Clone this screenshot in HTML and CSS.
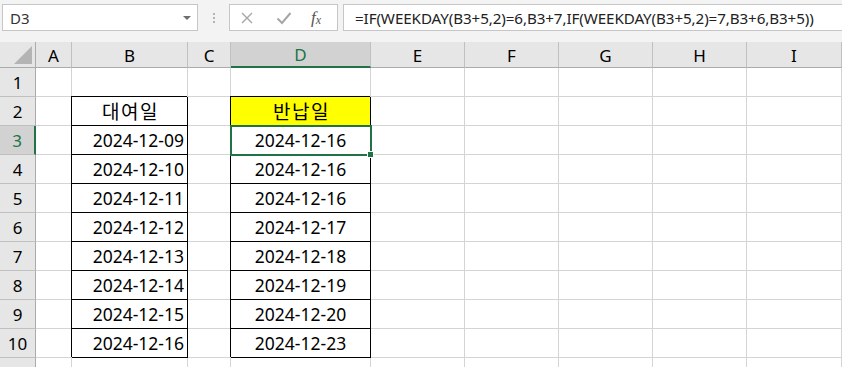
FILE: index.html
```html
<!DOCTYPE html>
<html lang="ko">

<head>
    <meta charset="UTF-8">
    <meta name="viewport" content="width=device-width, initial-scale=1.0">
    <title>반납일 계산</title>
    <link rel="stylesheet" href="styles.css">
</head>

<body>
    <div class="formula-bar">
        <div class="name-box">
            <span>D3</span>
            <span class="caret"></span>
        </div>
        <div class="grip"><i></i><i></i><i></i></div>
        <div class="fx-buttons">
            <svg class="icon" width="14" height="14" viewBox="0 0 14 14">
                <path d="M2 2L12 12M12 2L2 12" stroke="#a6a6a6" stroke-width="1.4" fill="none" />
            </svg>
            <svg class="icon" width="16" height="14" viewBox="0 0 16 14">
                <path d="M1.5 7.5L6 12L14.5 2" stroke="#a6a6a6" stroke-width="2" fill="none" />
            </svg>
            <span class="fx">f<sub>x</sub></span>
        </div>
        <div class="formula">=IF(WEEKDAY(B3+5,2)=6,B3+7,IF(WEEKDAY(B3+5,2)=7,B3+6,B3+5))</div>
    </div>

    <div class="sheet" id="sheet"></div>

    <script>
        const sheet = document.getElementById('sheet');
        const cols = ['A', 'B', 'C', 'D', 'E', 'F', 'G', 'H', 'I'];
        const loans = ['2024-12-09', '2024-12-10', '2024-12-11', '2024-12-12',
            '2024-12-13', '2024-12-14', '2024-12-15', '2024-12-16'];
        const returns = ['2024-12-16', '2024-12-16', '2024-12-16', '2024-12-17',
            '2024-12-18', '2024-12-19', '2024-12-20', '2024-12-23'];

        function cell(cls, text) {
            const el = document.createElement('div');
            el.className = cls;
            if (text) el.textContent = text;
            sheet.appendChild(el);
            return el;
        }

        // header row
        cell('corner');
        cols.forEach(c => cell(c === 'D' ? 'col-head active' : 'col-head', c));

        // rows 1..11
        for (let r = 1; r <= 11; r++) {
            cell(r === 3 ? 'row-head active' : 'row-head', r);
            cols.forEach(c => {
                let cls = 'cell';
                let text = '';
                if (r >= 2 && r <= 10 && (c === 'B' || c === 'D')) cls += ' boxed';
                if (r === 2 && c === 'B') { cls += ' center title'; text = '대여일'; }
                if (r === 2 && c === 'D') { cls += ' center title yellow'; text = '반납일'; }
                if (r >= 3 && r <= 10 && c === 'B') { cls += ' right'; text = loans[r - 3]; }
                if (r >= 3 && r <= 10 && c === 'D') { cls += ' center'; text = returns[r - 3]; }
                if (r === 3 && c === 'D') cls += ' selected';
                cell(cls, text);
            });
        }
    </script>
</body>

</html>
```

FILE: styles.css
```css
body {
    margin: 0;
    background: #ffffff;
    font-family: "Noto Sans", "Noto Sans CJK KR", sans-serif;
    color: #000;
    overflow: hidden;
}

.formula-bar {
    display: flex;
    align-items: center;
    height: 42px;
    padding: 0 0 7px 2px;
    box-sizing: border-box;
    background: #f3f3f3;
}

.name-box,
.fx-buttons,
.formula {
    height: 27px;
    box-sizing: border-box;
    background: #fff;
    border: 1px solid #c6c6c6;
    display: flex;
    align-items: center;
}

.name-box {
    width: 196px;
    padding: 0 6px 0 7px;
    justify-content: space-between;
    font-size: 15px;
    color: #333;
}

.caret {
    width: 0;
    height: 0;
    border-left: 4px solid transparent;
    border-right: 4px solid transparent;
    border-top: 4px solid #6e6e6e;
}

.grip {
    width: 31px;
    display: flex;
    flex-direction: column;
    align-items: center;
    gap: 2px;
}

.grip i {
    width: 2px;
    height: 2px;
    background: #b4b4b4;
}

.fx-buttons {
    width: 109px;
    padding: 0 0 0 10px;
    gap: 22px;
}

.fx {
    font-family: "Liberation Serif", serif;
    font-style: italic;
    font-size: 17px;
    color: #555;
    margin-left: -3px;
    line-height: 1;
}

.fx sub {
    font-size: 12px;
    vertical-align: -1px;
}

.formula {
    flex: 1;
    margin-left: 5px;
    border-right: none;
    padding-left: 11px;
    font-size: 15.2px;
    letter-spacing: -0.1px;
    color: #222;
    white-space: nowrap;
}

.sheet {
    display: grid;
    grid-template-columns: 36px 36px 116px 43px 140px 94px 94px 94px 94px 95px;
    grid-template-rows: 26px repeat(11, 29px);
}

.corner,
.col-head,
.row-head {
    background: #e6e6e6;
    box-sizing: border-box;
    display: flex;
    align-items: center;
    justify-content: center;
    font-size: 17px;
    color: #000;
}

.corner {
    position: relative;
    border-right: 1px solid #ababab;
    border-bottom: 1px solid #ababab;
}

.corner::after {
    content: "";
    position: absolute;
    right: 3px;
    bottom: 3px;
    border-left: 18px solid transparent;
    border-bottom: 18px solid #b4b4b4;
}

.col-head {
    border-right: 1px solid #c0c0c0;
    border-bottom: 1px solid #ababab;
    padding-top: 1px;
}

.col-head.active {
    background: #d2d2d2;
    color: #217346;
    border-bottom: 2px solid #217346;
}

.row-head {
    border-right: 1px solid #ababab;
    border-bottom: 1px solid #c0c0c0;
}

.row-head.active {
    background: #d2d2d2;
    color: #217346;
    border-right: 2px solid #217346;
}

.cell {
    box-sizing: border-box;
    border-right: 1px solid #d4d4d4;
    border-bottom: 1px solid #d4d4d4;
    display: flex;
    align-items: center;
    font-size: 17.5px;
    padding: 0 3px 0 3px;
    white-space: nowrap;
}

.cell.title {
    font-size: 19px;
    letter-spacing: 1.5px;
    padding-left: 5px;
}

.cell.boxed {
    border-right-color: #000;
    border-bottom-color: #000;
    box-shadow: -1px -1px 0 #000;
}

.cell.center {
    justify-content: center;
}

.cell.right {
    justify-content: flex-end;
}

.cell.yellow {
    background: #ffff00;
}

.cell.selected {
    position: relative;
    outline: 2px solid #217346;
    outline-offset: -1px;
}

.cell.selected::after {
    content: "";
    position: absolute;
    right: -4px;
    bottom: -4px;
    width: 5px;
    height: 5px;
    background: #217346;
    border: 1px solid #fff;
}
```
